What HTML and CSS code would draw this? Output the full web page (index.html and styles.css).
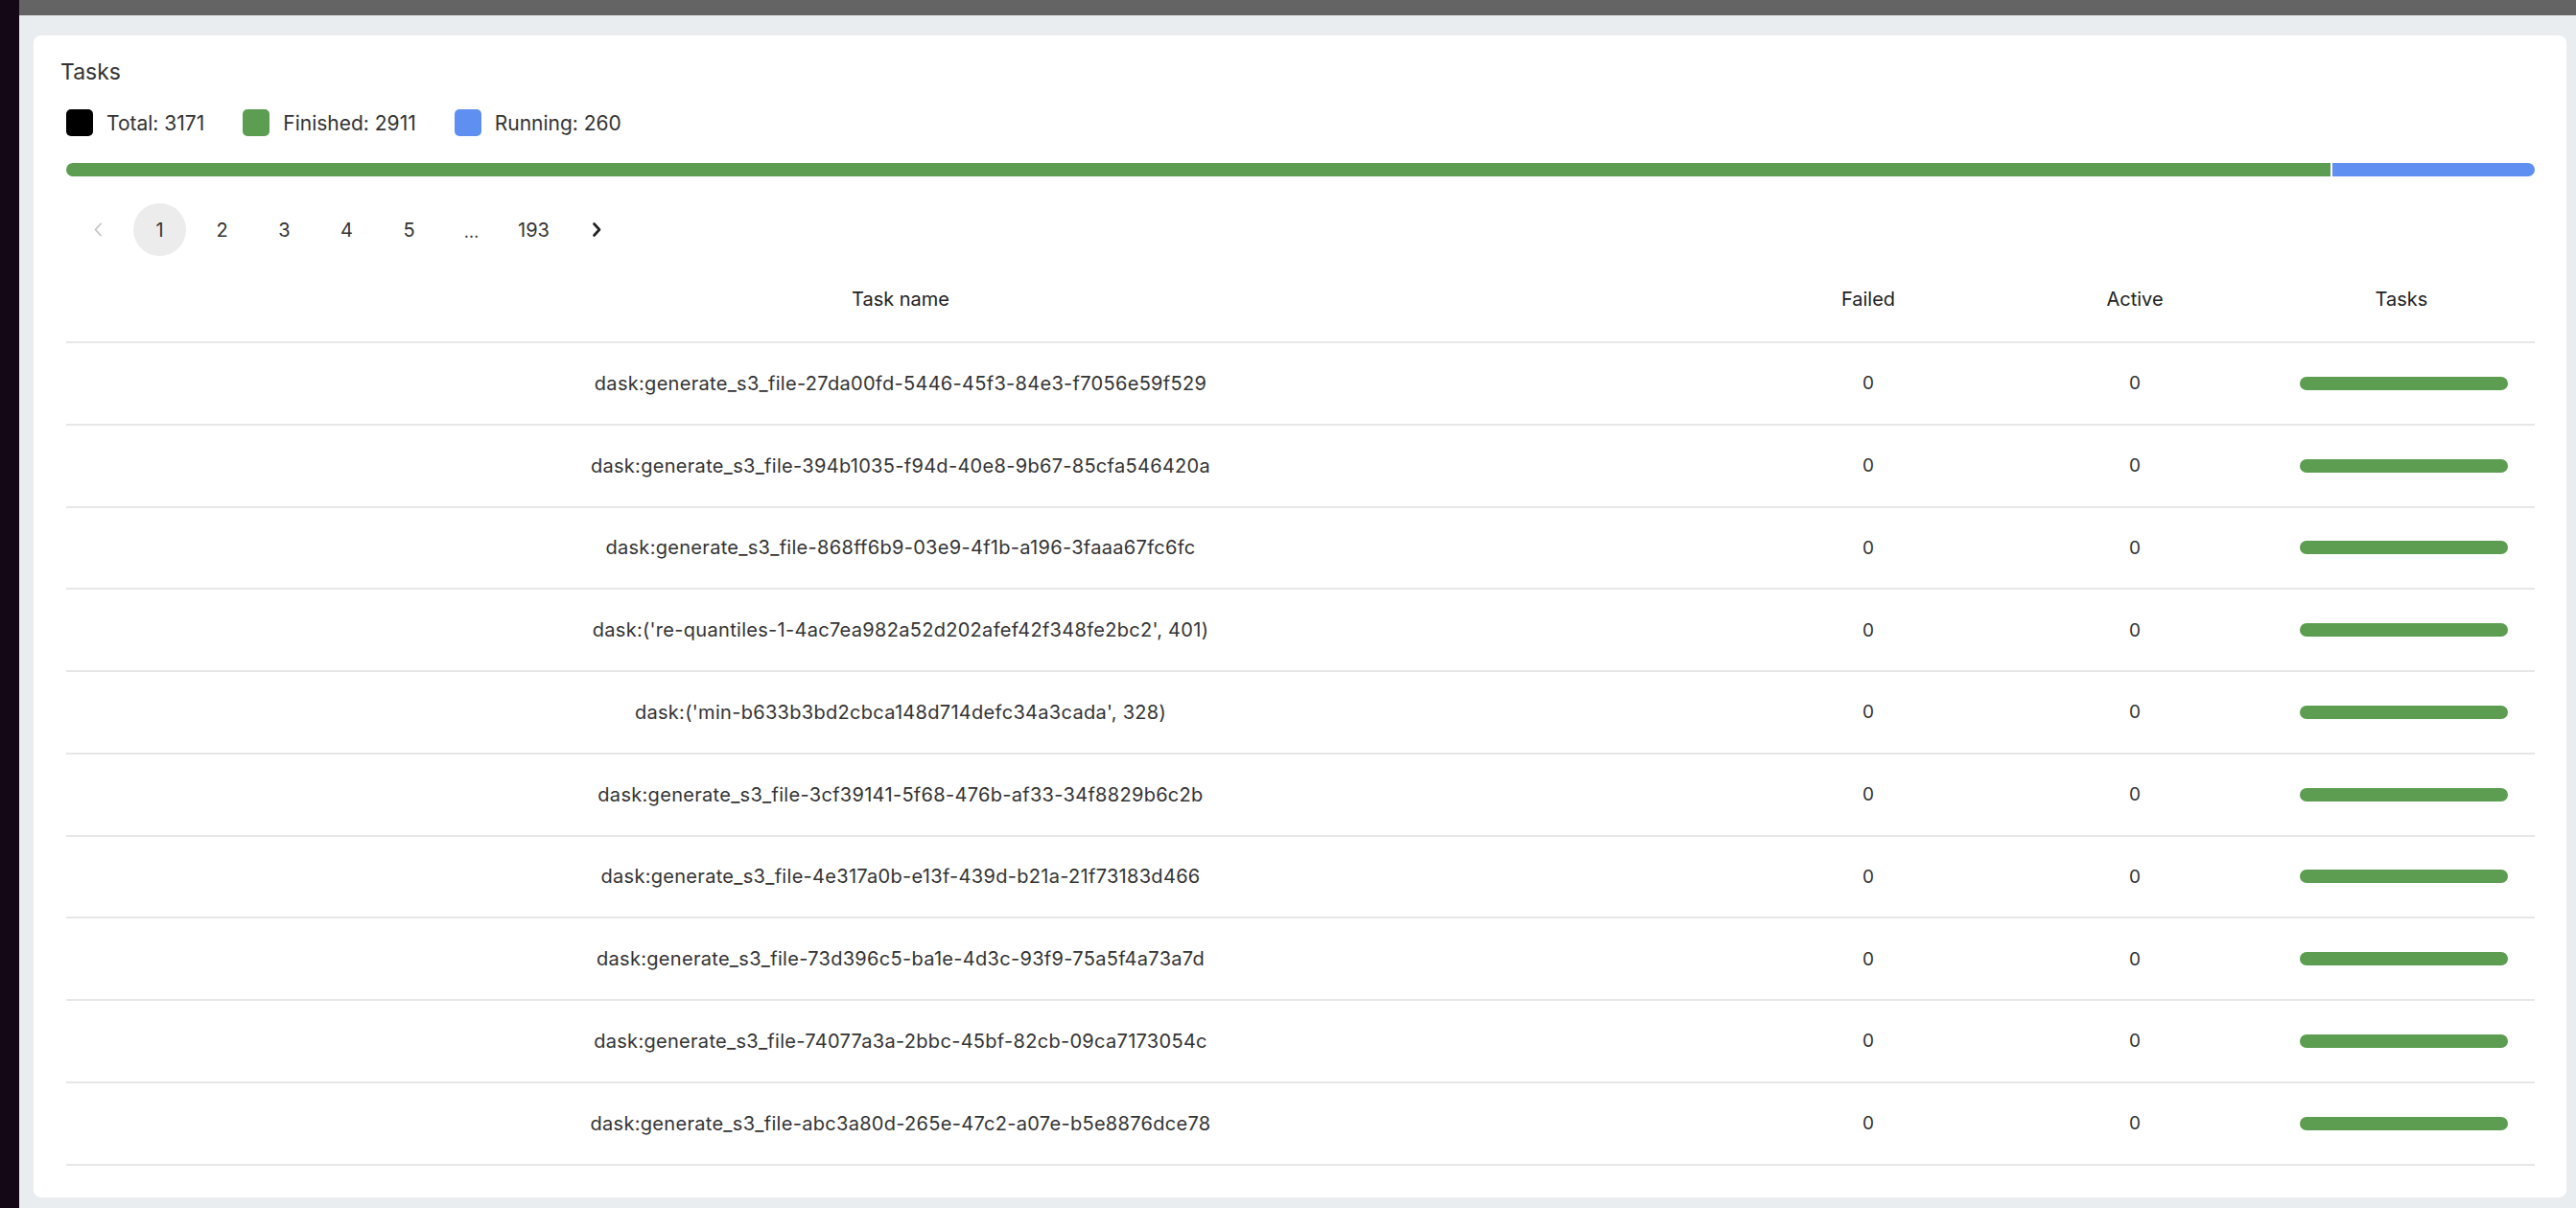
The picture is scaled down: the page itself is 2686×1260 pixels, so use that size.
FILE: index.html
```html
<!DOCTYPE html>
<html lang="en">
<head>
<meta charset="utf-8">
<title>Tasks</title>
<link rel="stylesheet" href="styles.css">
</head>
<body>
<div class="side-strip"></div>
<div class="main">
  <div class="top-bar"></div>
  <div class="content">
    <section class="card">
      <h2 class="card-title">Tasks</h2>
      <div class="card-body">
        <div class="legend">
          <div class="legend-item"><span class="swatch swatch-total"></span><span>Total: 3171</span></div>
          <div class="legend-item"><span class="swatch swatch-finished"></span><span>Finished: 2911</span></div>
          <div class="legend-item"><span class="swatch swatch-running"></span><span>Running: 260</span></div>
        </div>
        <div class="progress">
          <div class="seg seg-finished" style="flex-grow: 2911"></div>
          <div class="seg seg-running" style="flex-grow: 260"></div>
        </div>
        <nav class="pagination">
          <span class="page-btn nav-btn disabled">
            <svg width="10" height="15" viewBox="0 0 10 15"><polyline points="8,1.5 2.5,7.5 8,13.5" fill="none" stroke="#c4c4c4" stroke-width="1.8" stroke-linecap="round" stroke-linejoin="round"/></svg>
          </span>
          <span class="page-btn active">1</span>
          <span class="page-btn">2</span>
          <span class="page-btn">3</span>
          <span class="page-btn">4</span>
          <span class="page-btn">5</span>
          <span class="page-btn ellipsis">…</span>
          <span class="page-btn">193</span>
          <span class="page-btn nav-btn">
            <svg width="10" height="15" viewBox="0 0 10 15"><polyline points="2.5,1.5 8,7.5 2.5,13.5" fill="none" stroke="#222" stroke-width="2.6" stroke-linecap="round" stroke-linejoin="round"/></svg>
          </span>
        </nav>
        <div class="table">
          <div class="row head">
            <div class="cell">Task name</div>
            <div class="cell">Failed</div>
            <div class="cell">Active</div>
            <div class="cell">Tasks</div>
          </div>
          <div class="row"><div class="cell name">dask:generate_s3_file-27da00fd-5446-45f3-84e3-f7056e59f529</div><div class="cell">0</div><div class="cell">0</div><div class="cell"><span class="mini-bar"></span></div></div>
          <div class="row"><div class="cell name">dask:generate_s3_file-394b1035-f94d-40e8-9b67-85cfa546420a</div><div class="cell">0</div><div class="cell">0</div><div class="cell"><span class="mini-bar"></span></div></div>
          <div class="row"><div class="cell name">dask:generate_s3_file-868ff6b9-03e9-4f1b-a196-3faaa67fc6fc</div><div class="cell">0</div><div class="cell">0</div><div class="cell"><span class="mini-bar"></span></div></div>
          <div class="row"><div class="cell name">dask:('re-quantiles-1-4ac7ea982a52d202afef42f348fe2bc2', 401)</div><div class="cell">0</div><div class="cell">0</div><div class="cell"><span class="mini-bar"></span></div></div>
          <div class="row"><div class="cell name">dask:('min-b633b3bd2cbca148d714defc34a3cada', 328)</div><div class="cell">0</div><div class="cell">0</div><div class="cell"><span class="mini-bar"></span></div></div>
          <div class="row"><div class="cell name">dask:generate_s3_file-3cf39141-5f68-476b-af33-34f8829b6c2b</div><div class="cell">0</div><div class="cell">0</div><div class="cell"><span class="mini-bar"></span></div></div>
          <div class="row"><div class="cell name">dask:generate_s3_file-4e317a0b-e13f-439d-b21a-21f73183d466</div><div class="cell">0</div><div class="cell">0</div><div class="cell"><span class="mini-bar"></span></div></div>
          <div class="row"><div class="cell name">dask:generate_s3_file-73d396c5-ba1e-4d3c-93f9-75a5f4a73a7d</div><div class="cell">0</div><div class="cell">0</div><div class="cell"><span class="mini-bar"></span></div></div>
          <div class="row"><div class="cell name">dask:generate_s3_file-74077a3a-2bbc-45bf-82cb-09ca7173054c</div><div class="cell">0</div><div class="cell">0</div><div class="cell"><span class="mini-bar"></span></div></div>
          <div class="row"><div class="cell name">dask:generate_s3_file-abc3a80d-265e-47c2-a07e-b5e8876dce78</div><div class="cell">0</div><div class="cell">0</div><div class="cell"><span class="mini-bar"></span></div></div>
        </div>
      </div>
    </section>
  </div>
</div>
</body>
</html>
```

FILE: styles.css
```css
* { box-sizing: border-box; }

html, body {
  margin: 0;
  height: 100%;
}

body {
  display: flex;
  height: 1260px;
  overflow: hidden;
  font-family: Inter, "Liberation Sans", Arial, sans-serif;
  color: #333;
  background: #e9edf0;
}

.side-strip {
  width: 20px;
  flex: none;
  background: #150816;
}

.main {
  flex: 1;
  display: flex;
  flex-direction: column;
  min-width: 0;
}

.top-bar {
  height: 16px;
  flex: none;
  background: #646464;
}

.content {
  flex: 1;
  display: flex;
  flex-direction: column;
  padding: 21px 10px 11px 15px;
  background: #e9edf0;
  min-height: 0;
}

.card {
  flex: 1;
  background: #fff;
  border-radius: 8px;
  padding-top: 24px;
  min-height: 0;
}

.card-title {
  margin: 0;
  padding-left: 28px;
  font-size: 23px;
  line-height: 28px;
  font-weight: 400;
  color: #333;
}

.card-body {
  padding: 0 33px 0 34px;
}

.legend {
  display: flex;
  align-items: center;
  gap: 40px;
  margin-top: 25px;
  height: 28px;
}

.legend-item {
  display: flex;
  align-items: center;
  gap: 14px;
  font-size: 21px;
  color: #333;
}

.swatch {
  width: 28px;
  height: 28px;
  border-radius: 5px;
  display: inline-block;
}

.swatch-total { background: #000; }
.swatch-finished { background: #5c9d51; }
.swatch-running { background: #5f8ff0; }

.progress {
  margin-top: 28px;
  height: 14px;
  display: flex;
  gap: 2px;
  border-radius: 7px;
  overflow: hidden;
}

.seg { flex-basis: 0; height: 100%; }
.seg-finished { background: #5c9d51; }
.seg-running { background: #5f8ff0; }

.pagination {
  display: flex;
  align-items: center;
  gap: 10px;
  margin-top: 28px;
  padding-left: 5px;
  height: 55px;
}

.page-btn {
  width: 55px;
  height: 55px;
  border-radius: 50%;
  display: flex;
  align-items: center;
  justify-content: center;
  font-size: 20px;
  color: #333;
}

.page-btn.active { background: #ececec; }
.page-btn.ellipsis { font-size: 18px; padding-top: 4px; }

.table {
  display: flex;
  flex-direction: column;
}

.row {
  display: grid;
  grid-template-columns: 1fr 278px 278px 278px;
  height: 85.75px;
  border-bottom: 2px solid #e7e7e7;
  align-items: center;
  font-size: 19px;
  color: #333;
}

.row.head {
  height: 91px;
  font-size: 20px;
  color: #222;
}

.cell {
  text-align: center;
  display: flex;
  justify-content: center;
  align-items: center;
}

.cell.name {
  font-size: 20px;
  letter-spacing: 0.3px;
}

.mini-bar {
  display: block;
  width: 217px;
  height: 14px;
  border-radius: 7px;
  background: #5c9d51;
  margin-left: 5px;
}
```
